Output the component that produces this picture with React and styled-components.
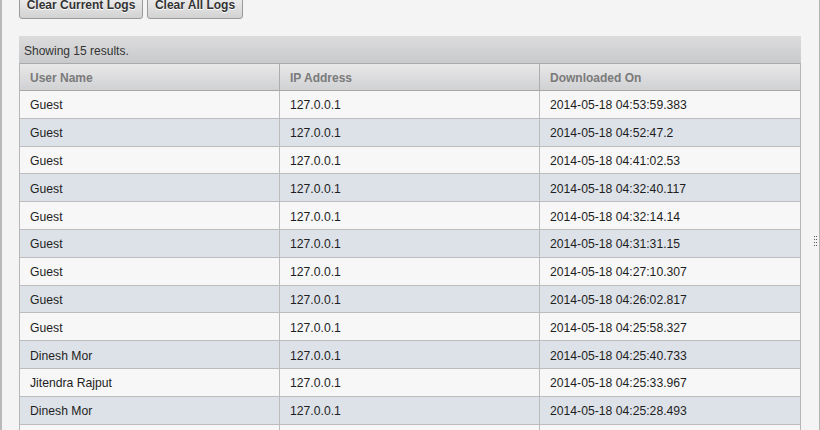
import React from "react";
import styled, { createGlobalStyle } from "styled-components";

const Global = createGlobalStyle`
  html, body { margin: 0; padding: 0; background: #f3f3f3; }
  body { font-family: "Liberation Sans", Arial, sans-serif; font-size: 12px; color: #222; overflow: hidden; }
`;

const Page = styled.div`
  position: relative;
  width: 820px;
  height: 430px;
  box-sizing: border-box;
  border-left: 2px solid #b9b9b9;
  border-right: 1px solid #b4b4b4;
  padding: 0 17px 0 17px;
  background: #f4f4f4;
  overflow: hidden;
`;

const Toolbar = styled.div`
  display: flex;
  gap: 4px;
  margin-top: -6px;
`;

const Button = styled.button`
  box-sizing: border-box;
  height: 25px;
  padding: 0 0 3px;
  border: 1px solid #9a9a9a;
  border-radius: 3px;
  background: linear-gradient(#f0f0f0, #d2d2d2);
  font-family: "Liberation Sans", Arial, sans-serif;
  font-weight: bold;
  font-size: 12px;
  color: #333;
  white-space: nowrap;
  text-shadow: 0 1px 0 #fff;
  box-shadow: inset 0 1px 0 #fff;
  width: ${(p) => p.$w}px;
`;

const Panel = styled.div`
  margin-top: 17px;
  width: 782px;
`;

const Summary = styled.div`
  box-sizing: border-box;
  height: 27px;
  display: flex;
  align-items: center;
  padding: 2px 0 0 5px;
  background: linear-gradient(#dcdcdd, #c9cacc);
  color: #333;
  font-size: 12px;
`;

const Table = styled.div`
  border-left: 1px solid #b6b6b6;
  border-right: 1px solid #b6b6b6;
`;

const Row = styled.div`
  display: grid;
  grid-template-columns: 259px 260px 1fr;
  height: 26.8px;
  border-bottom: 1px solid #bcbcbc;
  background: ${(p) => (p.$alt ? "#dde2e8" : "#f7f7f7")};
`;

const HeaderRow = styled(Row)`
  height: 26px;
  border-top: 1px solid #aaa;
  border-bottom: 1px solid #a8a8a8;
  background: linear-gradient(#e8e8e9, #d0d1d3);
`;

const Cell = styled.div`
  display: flex;
  align-items: center;
  padding: 2px 0 0 10px;
  border-left: ${(p) => (p.$first ? "none" : "1px solid #bcbcbc")};
  color: #1e1e1e;
  font-size: 12.2px;
  white-space: nowrap;
`;

const HeadCell = styled(Cell)`
  font-weight: bold;
  font-size: 12px;
  color: #7a7a7a;
  border-left: ${(p) => (p.$first ? "none" : "1px solid #adadad")};
`;

const Grip = styled.div`
  position: absolute;
  right: 2px;
  top: 236px;
  display: grid;
  grid-template-columns: 1px 1px;
  gap: 2px 1px;
`;

const Dot = styled.span`
  width: 1px;
  height: 1px;
  background: #555;
`;

const rows = [
  ["Guest", "2014-05-18 04:53:59.383"],
  ["Guest", "2014-05-18 04:52:47.2"],
  ["Guest", "2014-05-18 04:41:02.53"],
  ["Guest", "2014-05-18 04:32:40.117"],
  ["Guest", "2014-05-18 04:32:14.14"],
  ["Guest", "2014-05-18 04:31:31.15"],
  ["Guest", "2014-05-18 04:27:10.307"],
  ["Guest", "2014-05-18 04:26:02.817"],
  ["Guest", "2014-05-18 04:25:58.327"],
  ["Dinesh Mor", "2014-05-18 04:25:40.733"],
  ["Jitendra Rajput", "2014-05-18 04:25:33.967"],
  ["Dinesh Mor", "2014-05-18 04:25:28.493"],
  ["Guest", "2014-05-18 04:25:20.110"],
  ["Guest", "2014-05-18 04:25:12.457"],
  ["Guest", "2014-05-18 04:25:03.280"],
];

export default function App() {
  return (
    <>
      <Global />
      <Page>
        <Toolbar>
          <Button $w={124}>Clear Current Logs</Button>
          <Button $w={96}>Clear All Logs</Button>
        </Toolbar>
        <Panel>
          <Summary>Showing 15 results.</Summary>
          <Table>
            <HeaderRow>
              <HeadCell $first>User Name</HeadCell>
              <HeadCell>IP Address</HeadCell>
              <HeadCell>Downloaded On</HeadCell>
            </HeaderRow>
            {rows.map((r, i) => (
              <Row key={i} $alt={i % 2 === 1}>
                <Cell $first>{r[0]}</Cell>
                <Cell>127.0.0.1</Cell>
                <Cell>{r[1]}</Cell>
              </Row>
            ))}
          </Table>
        </Panel>
        <Grip>
          {Array.from({ length: 8 }).map((_, i) => (
            <Dot key={i} />
          ))}
        </Grip>
      </Page>
    </>
  );
}
